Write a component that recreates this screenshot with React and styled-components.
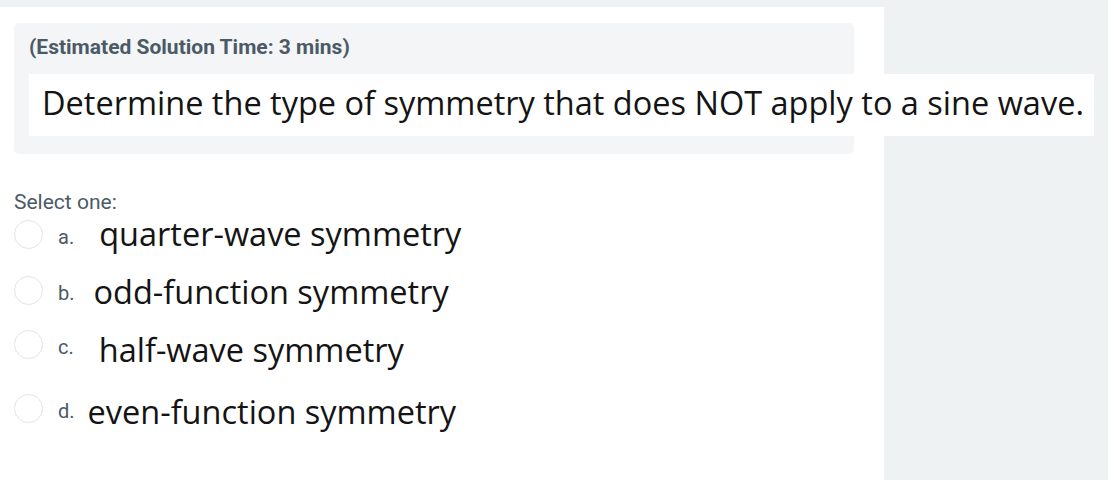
import React from 'react';
import styled, { createGlobalStyle } from 'styled-components';

const GlobalStyle = createGlobalStyle`
  body {
    margin: 0;
    background: #eff2f3;
    font-family: Roboto, "Liberation Sans", sans-serif;
  }
`;

const Page = styled.div`
  padding-top: 7px;
  height: 473px;
  overflow: hidden;
`;

const Panel = styled.div`
  width: 884px;
  height: 473px;
  background: #ffffff;
  box-sizing: border-box;
  padding: 16px 30px 0 14px;
`;

const InfoBox = styled.div`
  background: #f3f5f7;
  border-radius: 5px;
  padding: 12px 15px 18px;
`;

const Estimate = styled.div`
  font-size: 21px;
  font-weight: 700;
  color: #4b5a66;
  line-height: 24px;
  margin-bottom: 15px;
`;

const QuestionBox = styled.div`
  background: #ffffff;
  width: max-content;
  height: 62px;
  box-sizing: border-box;
  display: flex;
  align-items: center;
  padding: 0 10px 6px 13px;
  font-family: "Open Sans", "Noto Sans", sans-serif;
  font-size: 32.5px;
  color: #141414;
`;

const SelectLabel = styled.div`
  margin-top: 36px;
  font-size: 21px;
  color: #4b5a66;
  line-height: 24px;
`;

const Options = styled.div`
  display: flex;
  flex-direction: column;
`;

const Option = styled.label`
  display: flex;
  align-items: center;
  height: 40px;
  margin-top: ${p => p.$mt}px;
`;

const Radio = styled.span`
  width: 27px;
  height: 27px;
  border: 1px solid #dfe5e8;
  border-radius: 50%;
  background: #fff;
  flex-shrink: 0;
`;

const Letter = styled.span`
  font-size: 20px;
  line-height: 20px;
  color: #4b5a66;
  margin-left: 15px;
  padding-top: 5px;
`;

const Answer = styled.span`
  font-family: "Open Sans", "Noto Sans", sans-serif;
  font-size: 32.5px;
  line-height: 40px;
  color: #141414;
  white-space: nowrap;
  margin-left: ${p => p.$gap}px;
  padding-top: ${p => p.$drop}px;
`;

const options = [
  { letter: 'a.', text: 'quarter-wave symmetry', gap: 25, mt: 0, drop: 0 },
  { letter: 'b.', text: 'odd-function symmetry', gap: 19, mt: 16, drop: 4 },
  { letter: 'c.', text: 'half-wave symmetry', gap: 25, mt: 14, drop: 12 },
  { letter: 'd.', text: 'even-function symmetry', gap: 13, mt: 24, drop: 8 },
];

export default function App() {
  return (
    <>
      <GlobalStyle />
      <Page>
        <Panel>
          <InfoBox>
            <Estimate>(Estimated Solution Time: 3 mins)</Estimate>
            <QuestionBox>Determine the type of symmetry that does NOT apply to a sine wave.</QuestionBox>
          </InfoBox>
          <SelectLabel>Select one:</SelectLabel>
          <Options>
            {options.map(o => (
              <Option key={o.letter} $mt={o.mt}>
                <Radio />
                <Letter>{o.letter}</Letter>
                <Answer $gap={o.gap} $drop={o.drop}>{o.text}</Answer>
              </Option>
            ))}
          </Options>
        </Panel>
      </Page>
    </>
  );
}
